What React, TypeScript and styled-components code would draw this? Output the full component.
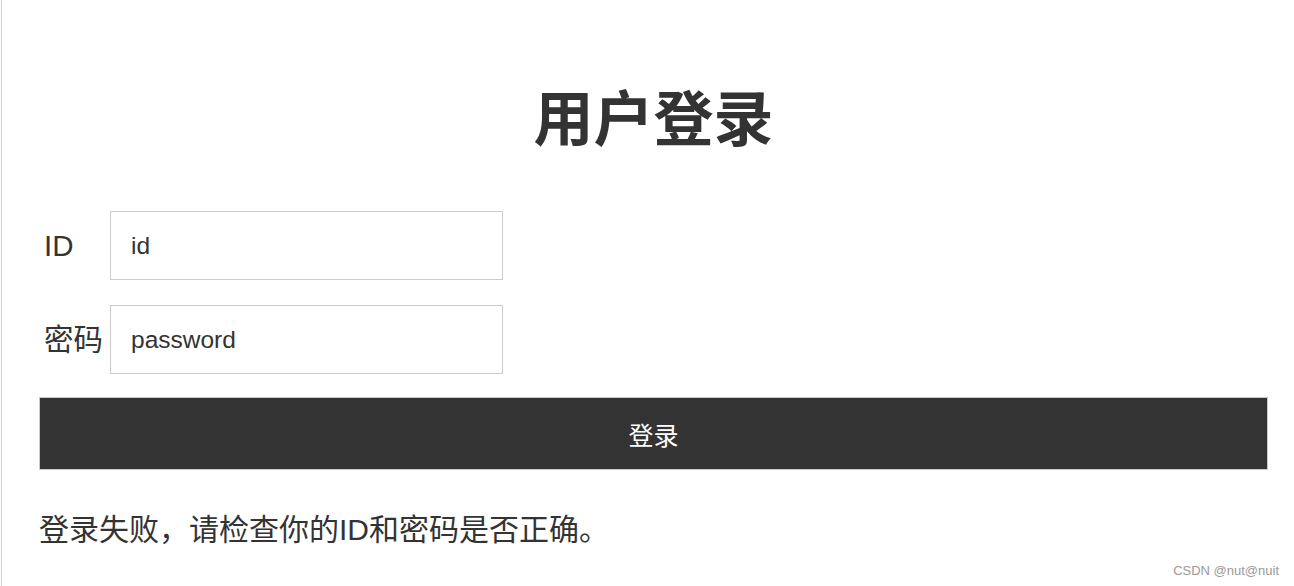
import React from "react";
import styled, { createGlobalStyle } from "styled-components";

const GlobalStyle = createGlobalStyle`
  html, body {
    margin: 0;
    padding: 0;
    background: #ffffff;
  }
  body {
    font-family: "Liberation Sans", Arial, "Noto Sans CJK SC", sans-serif;
    color: #333;
  }
`;

const Page = styled.div`
  position: relative;
  height: 586px;
  margin-left: 1px;
  border-left: 1px solid #cfcfcf;
  overflow: hidden;
`;

const Form = styled.div`
  display: flex;
  flex-direction: column;
  margin-left: 37px;
  width: 1229px;
  padding-top: 85px;
`;

const Title = styled.h1`
  margin: 0 0 54px;
  font-size: 60px;
  line-height: 72px;
  font-weight: bold;
  text-align: center;
  color: #333;
  font-family: "Liberation Sans", "Noto Sans CJK SC", sans-serif;
`;

const Row = styled.div`
  display: flex;
  align-items: center;
  margin-bottom: ${(p: { $gap: number }) => p.$gap}px;
`;

const Label = styled.label`
  width: 66px;
  padding-left: 5px;
  font-size: 29.5px;
  line-height: 36px;
  color: #333;
  font-family: "Liberation Sans", "Noto Sans CJK SC", sans-serif;
  white-space: nowrap;
`;

const Field = styled.input`
  box-sizing: border-box;
  width: 393px;
  height: 69px;
  border: 1px solid #cbcbcb;
  padding: 0 20px;
  font-size: 24.5px;
  color: #333;
  font-family: "Liberation Sans", "Noto Sans CJK SC", sans-serif;
  outline: none;
  &::placeholder {
    color: #333;
  }
`;

const Submit = styled.button`
  box-sizing: border-box;
  width: 1229px;
  height: 73px;
  border: 1px solid #c8c8c8;
  background: #333;
  color: #fff;
  font-size: 25px;
  font-family: "Liberation Sans", "Noto Sans CJK SC", sans-serif;
  cursor: pointer;
`;

const Message = styled.p`
  margin: 42px 0 0;
  font-size: 30px;
  line-height: 36px;
  color: #333;
  font-family: "Liberation Sans", "Noto Sans CJK SC", sans-serif;
`;

const Watermark = styled.div`
  position: absolute;
  right: 15px;
  bottom: 8px;
  font-size: 13px;
  color: #9a9a9a;
  font-family: "Liberation Sans", sans-serif;
`;

export default function App() {
  return (
    <Page>
      <GlobalStyle />
      <Form>
        <Title>用户登录</Title>
        <Row $gap={25}>
          <Label>ID</Label>
          <Field type="text" placeholder="id" />
        </Row>
        <Row $gap={23}>
          <Label>密码</Label>
          <Field type="password" placeholder="password" />
        </Row>
        <Submit>登录</Submit>
        <Message>登录失败，请检查你的ID和密码是否正确。</Message>
      </Form>
      <Watermark>CSDN @nut@nuit</Watermark>
    </Page>
  );
}
